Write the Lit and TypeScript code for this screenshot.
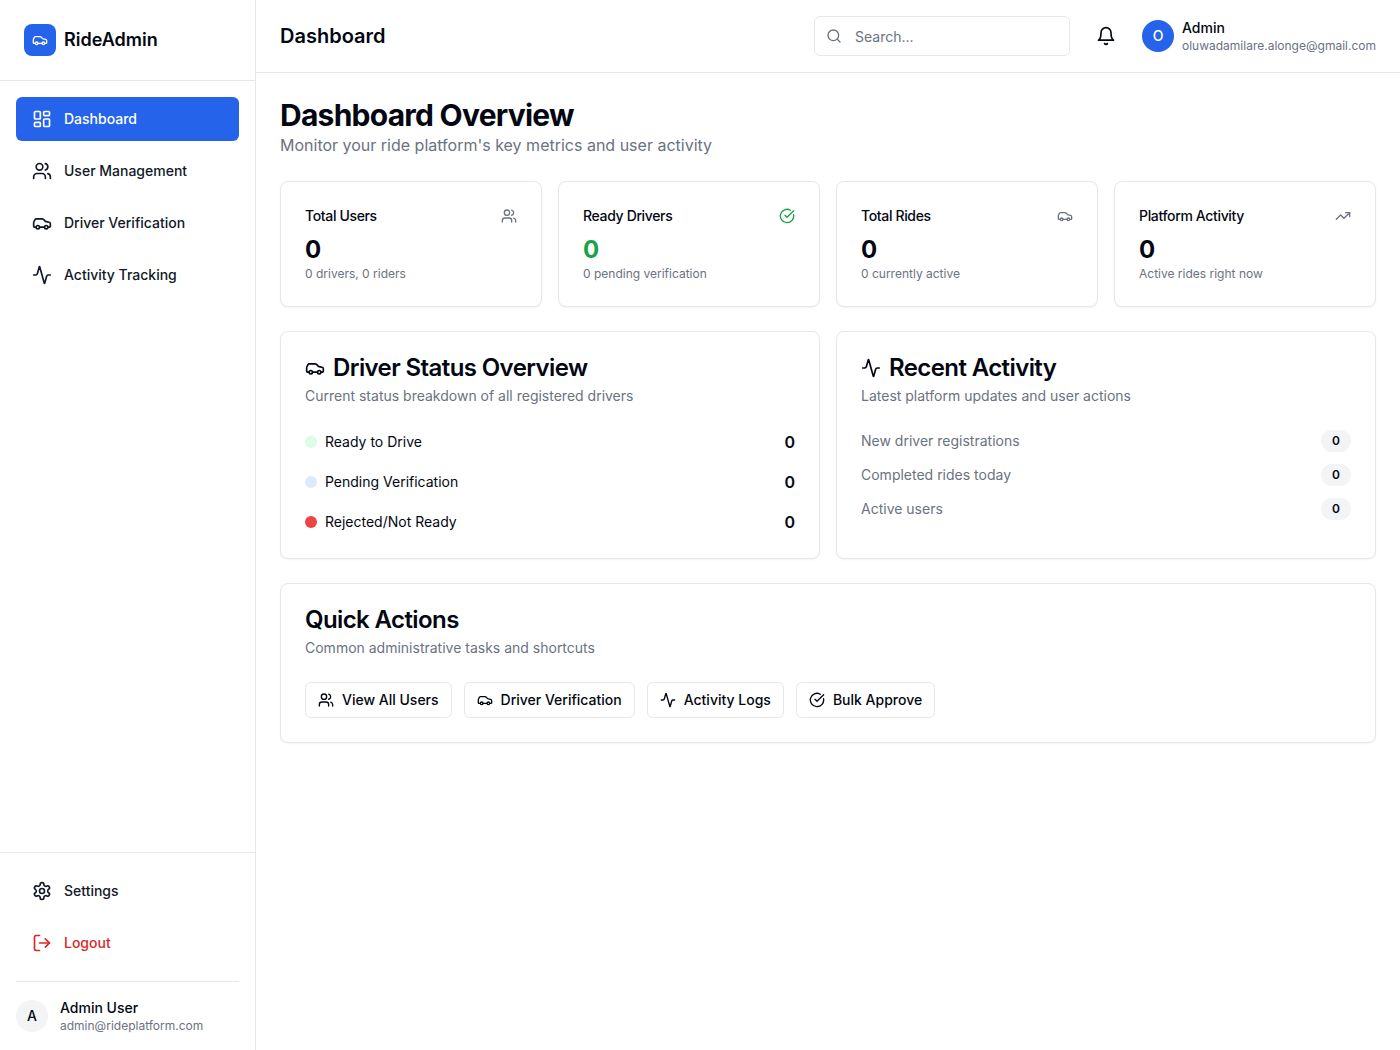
import { LitElement, html, css, svg } from "lit";
import { customElement } from "lit/decorators.js";

const paths = {
  car: svg`<path d="M19 17h2c.6 0 1-.4 1-1v-3c0-.9-.7-1.7-1.5-1.9C18.7 10.6 16 10 16 10s-1.3-1.4-2.2-2.3c-.5-.4-1.1-.7-1.8-.7H5c-.6 0-1.1.4-1.4.9l-1.4 2.9A3.7 3.7 0 0 0 2 12v4c0 .6.4 1 1 1h2"/><circle cx="7" cy="17" r="2"/><path d="M9 17h6"/><circle cx="17" cy="17" r="2"/>`,
  dash: svg`<rect width="7" height="9" x="3" y="3" rx="1"/><rect width="7" height="5" x="14" y="3" rx="1"/><rect width="7" height="9" x="14" y="12" rx="1"/><rect width="7" height="5" x="3" y="16" rx="1"/>`,
  users: svg`<path d="M16 21v-2a4 4 0 0 0-4-4H6a4 4 0 0 0-4 4v2"/><circle cx="9" cy="7" r="4"/><path d="M22 21v-2a4 4 0 0 0-3-3.87"/><path d="M16 3.13a4 4 0 0 1 0 7.75"/>`,
  activity: svg`<path d="M22 12h-2.48a2 2 0 0 0-1.93 1.46l-2.35 8.36a.25.25 0 0 1-.48 0L9.24 2.18a.25.25 0 0 0-.48 0l-2.35 8.36A2 2 0 0 1 4.49 12H2"/>`,
  settings: svg`<path d="M12.22 2h-.44a2 2 0 0 0-2 2v.18a2 2 0 0 1-1 1.73l-.43.25a2 2 0 0 1-2 0l-.15-.08a2 2 0 0 0-2.73.73l-.22.38a2 2 0 0 0 .73 2.73l.15.1a2 2 0 0 1 1 1.72v.51a2 2 0 0 1-1 1.74l-.15.09a2 2 0 0 0-.73 2.73l.22.38a2 2 0 0 0 2.73.73l.15-.08a2 2 0 0 1 2 0l.43.25a2 2 0 0 1 1 1.73V20a2 2 0 0 0 2 2h.44a2 2 0 0 0 2-2v-.18a2 2 0 0 1 1-1.73l.43-.25a2 2 0 0 1 2 0l.15.08a2 2 0 0 0 2.73-.73l.22-.39a2 2 0 0 0-.73-2.73l-.15-.08a2 2 0 0 1-1-1.74v-.5a2 2 0 0 1 1-1.74l.15-.09a2 2 0 0 0 .73-2.73l-.22-.38a2 2 0 0 0-2.73-.73l-.15.08a2 2 0 0 1-2 0l-.43-.25a2 2 0 0 1-1-1.73V4a2 2 0 0 0-2-2z"/><circle cx="12" cy="12" r="3"/>`,
  logout: svg`<path d="M9 21H5a2 2 0 0 1-2-2V5a2 2 0 0 1 2-2h4"/><polyline points="16 17 21 12 16 7"/><line x1="21" x2="9" y1="12" y2="12"/>`,
  bell: svg`<path d="M6 8a6 6 0 0 1 12 0c0 7 3 9 3 9H3s3-2 3-9"/><path d="M10.3 21a1.94 1.94 0 0 0 3.4 0"/>`,
  search: svg`<circle cx="11" cy="11" r="8"/><path d="m21 21-4.3-4.3"/>`,
  check: svg`<path d="M21.801 10A10 10 0 1 1 17 3.335"/><path d="m9 11 3 3L22 4"/>`,
  trend: svg`<polyline points="22 7 13.5 15.5 8.5 10.5 2 17"/><polyline points="16 7 22 7 22 13"/>`,
};
type IconName = keyof typeof paths;

const icon = (name: IconName, size: number, cls = "") => html`<svg class="icon ${cls}" width=${size} height=${size} viewBox="0 0 24 24" fill="none" stroke="currentColor" stroke-width="2" stroke-linecap="round" stroke-linejoin="round">${paths[name]}</svg>`;

const nav: [IconName, string, boolean][] = [
  ["dash", "Dashboard", true],
  ["users", "User Management", false],
  ["car", "Driver Verification", false],
  ["activity", "Activity Tracking", false],
];
const stats: [string, IconName, string, string, string][] = [
  ["Total Users", "users", "0", "0 drivers, 0 riders", ""],
  ["Ready Drivers", "check", "0", "0 pending verification", "green"],
  ["Total Rides", "car", "0", "0 currently active", ""],
  ["Platform Activity", "trend", "0", "Active rides right now", ""],
];
const statuses: [string, string][] = [
  ["Ready to Drive", "d-green"],
  ["Pending Verification", "d-blue"],
  ["Rejected/Not Ready", "d-red"],
];
const recent = ["New driver registrations", "Completed rides today", "Active users"];
const actions: [IconName, string][] = [
  ["users", "View All Users"],
  ["car", "Driver Verification"],
  ["activity", "Activity Logs"],
  ["check", "Bulk Approve"],
];

@customElement("app-root")
export class AppRoot extends LitElement {
  static styles = css`
    :host {
      display: flex;
      min-height: 100vh;
      background: #fff;
      color: #030712;
      font-family: Inter, "Liberation Sans", sans-serif;
      font-size: 14px;
      line-height: 20px;
    }
    * { box-sizing: border-box; }
    .icon { display: block; flex: none; }
    .sidebar {
      width: 256px;
      flex: none;
      height: 1050px;
      border-right: 1px solid #e5e7eb;
      display: flex;
      flex-direction: column;
    }
    .brand {
      display: flex;
      align-items: center;
      gap: 8px;
      padding: 24px;
      border-bottom: 1px solid #e5e7eb;
    }
    .logo {
      width: 32px;
      height: 32px;
      border-radius: 8px;
      background: #2563eb;
      color: #fff;
      display: flex;
      align-items: center;
      justify-content: center;
    }
    .brand-name { font-size: 18px; line-height: 28px; font-weight: 600; }
    .nav { flex: 1; padding: 16px; display: flex; flex-direction: column; gap: 8px; }
    .item {
      height: 44px;
      padding: 0 16px;
      display: flex;
      align-items: center;
      gap: 12px;
      border-radius: 6px;
      font-weight: 500;
      color: #111827;
    }
    .item.active { background: #2563eb; color: #fff; }
    .item.danger { color: #dc2626; }
    .side-foot {
      border-top: 1px solid #e5e7eb;
      padding: 16px;
      display: flex;
      flex-direction: column;
      gap: 8px;
    }
    .side-user {
      margin-top: 8px;
      padding-top: 16px;
      border-top: 1px solid #e5e7eb;
      display: flex;
      align-items: center;
      gap: 12px;
    }
    .avatar {
      width: 32px;
      height: 32px;
      border-radius: 50%;
      display: flex;
      align-items: center;
      justify-content: center;
      flex: none;
      font-weight: 500;
    }
    .avatar.grey { background: #f3f4f6; }
    .avatar.blue { background: #2563eb; color: #fff; }
    .uname { font-weight: 500; }
    .umail { font-size: 12px; line-height: 16px; color: #6b7280; }
    .main { flex: 1; min-width: 0; }
    .topbar {
      height: 73px;
      padding: 16px 24px;
      border-bottom: 1px solid #e5e7eb;
      display: flex;
      align-items: center;
      justify-content: space-between;
    }
    .topbar h2 { margin: 0; font-size: 20px; line-height: 28px; font-weight: 600; }
    .tools { display: flex; align-items: center; gap: 16px; }
    .search {
      width: 256px;
      height: 40px;
      border: 1px solid #e5e7eb;
      border-radius: 6px;
      padding: 0 0 0 11px;
      display: flex;
      align-items: center;
      gap: 13px;
      color: #6b7280;
    }
    .search-text { padding-top: 2px; }
    .bell { width: 40px; height: 40px; display: flex; align-items: center; justify-content: center; }
    .me { display: flex; align-items: center; gap: 8px; }
    .content { padding: 24px; display: flex; flex-direction: column; gap: 24px; }
    h1 { margin: 0; font-size: 30px; line-height: 36px; font-weight: 700; letter-spacing: -0.75px; }
    .lead { margin: 0; font-size: 16px; line-height: 24px; color: #6b7280; }
    .stats { display: grid; grid-template-columns: repeat(4, 1fr); gap: 16px; }
    .two { display: grid; grid-template-columns: repeat(2, 1fr); gap: 16px; }
    .card {
      border: 1px solid #e5e7eb;
      border-radius: 8px;
      background: #fff;
      box-shadow: 0 1px 2px rgba(0, 0, 0, 0.05);
      padding: 24px;
    }
    .stat-head {
      display: flex;
      align-items: center;
      justify-content: space-between;
      font-weight: 500;
      letter-spacing: -0.35px;
      margin-bottom: 8px;
    }
    .stat-icon { color: #6b7280; }
    .stat-icon.green { color: #16a34a; }
    .stat-num { font-size: 24px; line-height: 32px; font-weight: 700; }
    .stat-num.green { color: #16a34a; }
    .stat-sub { font-size: 12px; line-height: 16px; color: #6b7280; }
    .card-title {
      margin: 0;
      display: flex;
      align-items: center;
      gap: 8px;
      font-size: 24px;
      line-height: 24px;
      font-weight: 600;
      letter-spacing: -0.6px;
    }
    .card-sub { margin: 6px 0 24px; color: #6b7280; }
    .rows { display: flex; flex-direction: column; gap: 16px; }
    .row { display: flex; align-items: center; justify-content: space-between; height: 24px; }
    .row-label { display: flex; align-items: center; gap: 8px; }
    .dot { width: 12px; height: 12px; border-radius: 50%; }
    .d-green { background: #dcfce7; }
    .d-blue { background: #dbeafe; }
    .d-red { background: #ef4444; }
    .row-val { font-size: 16px; line-height: 24px; font-weight: 600; }
    .rows.tight { gap: 12px; }
    .rows.tight .row { height: 22px; color: #6b7280; }
    .badge {
      padding: 2px 10px;
      height: 22px;
      border: 1px solid transparent;
      border-radius: 999px;
      background: #f3f4f6;
      color: #030712;
      font-size: 12px;
      line-height: 16px;
      font-weight: 600;
    }
    .actions { display: flex; gap: 12px; }
    .btn {
      height: 36px;
      padding: 0 12px;
      border: 1px solid #e5e7eb;
      border-radius: 6px;
      background: #fff;
      display: flex;
      align-items: center;
      gap: 8px;
      font-weight: 500;
    }
  `;

  render() {
    return html`
      <aside class="sidebar">
        <div class="brand">
          <div class="logo">${icon("car", 16)}</div>
          <div class="brand-name">RideAdmin</div>
        </div>
        <nav class="nav">
          ${nav.map(([i, label, active]) => html`<div class="item ${active ? "active" : ""}">${icon(i, 20)}<span>${label}</span></div>`)}
        </nav>
        <div class="side-foot">
          <div class="item">${icon("settings", 20)}<span>Settings</span></div>
          <div class="item danger">${icon("logout", 20)}<span>Logout</span></div>
          <div class="side-user">
            <div class="avatar grey">A</div>
            <div>
              <div class="uname">Admin User</div>
              <div class="umail">admin@rideplatform.com</div>
            </div>
          </div>
        </div>
      </aside>
      <div class="main">
        <header class="topbar">
          <h2>Dashboard</h2>
          <div class="tools">
            <div class="search">${icon("search", 16)}<span class="search-text">Search...</span></div>
            <div class="bell">${icon("bell", 20)}</div>
            <div class="me">
              <div class="avatar blue">O</div>
              <div>
                <div class="uname">Admin</div>
                <div class="umail">oluwadamilare.alonge@gmail.com</div>
              </div>
            </div>
          </div>
        </header>
        <main class="content">
          <div>
            <h1>Dashboard Overview</h1>
            <p class="lead">Monitor your ride platform's key metrics and user activity</p>
          </div>
          <section class="stats">
            ${stats.map(([title, i, num, sub, tone]) => html`
              <div class="card">
                <div class="stat-head"><span>${title}</span><span class="stat-icon ${tone}">${icon(i, 16)}</span></div>
                <div class="stat-num ${tone}">${num}</div>
                <div class="stat-sub">${sub}</div>
              </div>`)}
          </section>
          <section class="two">
            <div class="card">
              <h3 class="card-title">${icon("car", 20)}Driver Status Overview</h3>
              <p class="card-sub">Current status breakdown of all registered drivers</p>
              <div class="rows">
                ${statuses.map(([label, d]) => html`
                  <div class="row">
                    <div class="row-label"><span class="dot ${d}"></span><span>${label}</span></div>
                    <span class="row-val">0</span>
                  </div>`)}
              </div>
            </div>
            <div class="card">
              <h3 class="card-title">${icon("activity", 20)}Recent Activity</h3>
              <p class="card-sub">Latest platform updates and user actions</p>
              <div class="rows tight">
                ${recent.map((label) => html`<div class="row"><span>${label}</span><span class="badge">0</span></div>`)}
              </div>
            </div>
          </section>
          <section class="card">
            <h3 class="card-title">Quick Actions</h3>
            <p class="card-sub">Common administrative tasks and shortcuts</p>
            <div class="actions">
              ${actions.map(([i, label]) => html`<div class="btn">${icon(i, 16)}<span>${label}</span></div>`)}
            </div>
          </section>
        </main>
      </div>
    `;
  }
}
